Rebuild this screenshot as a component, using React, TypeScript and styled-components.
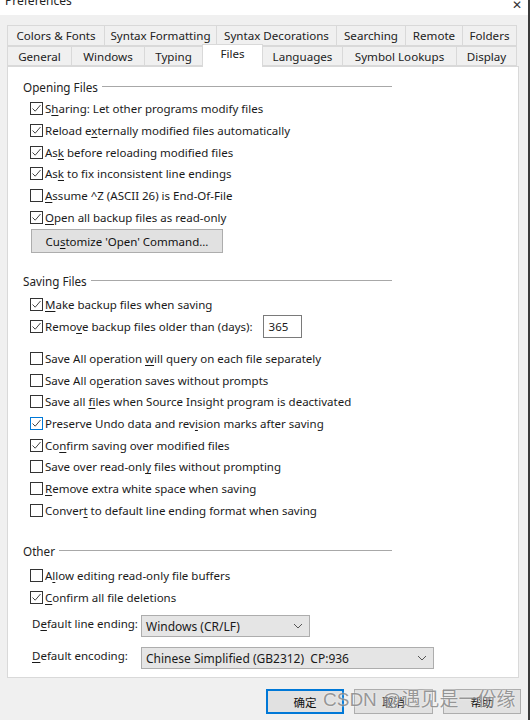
import React from 'react'
import styled, { createGlobalStyle } from 'styled-components'

const GlobalStyle = createGlobalStyle`
    html, body {
        margin: 0;
        padding: 0;
        background: #f0f0f0;
    }
    body {
        font-family: "Noto Sans", "Noto Sans CJK SC", sans-serif;
        font-size: 11.5px;
        color: #1a1a1a;
    }
`

const Window = styled.div`
    position: relative;
    width: 530px;
    height: 720px;
    box-sizing: border-box;
    background: #f0f0f0;
    border-right: 2px solid #3a3a3a;
    display: flex;
    flex-direction: column;
    overflow: hidden;
`
const TitleBar = styled.div`
    height: 15px;
    background: #fff;
    display: flex;
    justify-content: space-between;
    overflow: hidden;
    padding: 0 6px 0 5px;
`
const TitleText = styled.span`
    font-size: 12px;
    line-height: 12px;
    margin-top: -5px;
    color: #222;
`
const CloseGlyph = styled.span`
    font-size: 12px;
    line-height: 10px;
    color: #333;
`
const Body = styled.div`
    padding: 10px 0 0 7px;
    display: flex;
    flex-direction: column;
`
const TabRow = styled.div<{ $h: number }>`
    display: flex;
    align-items: flex-end;
    padding-left: 1px;
    height: ${p => p.$h}px;
`
const Tab = styled.div<{ $w: number; $selected?: boolean; $h: number }>`
    box-sizing: border-box;
    width: ${p => p.$w + 1}px;
    height: ${p => (p.$selected ? p.$h + 3 : p.$h)}px;
    margin-left: -1px;
    margin-top: ${p => (p.$selected ? -2 : 0)}px;
    margin-bottom: ${p => (p.$selected ? -1 : 0)}px;
    position: ${p => (p.$selected ? 'relative' : 'static')};
    z-index: ${p => (p.$selected ? 2 : 0)};
    background: ${p => (p.$selected ? '#fff' : '#f0f0f0')};
    border: 1px solid #d9d9d9;
    border-bottom: ${p => (p.$selected ? 'none' : '1px solid #d9d9d9')};
    display: flex;
    align-items: ${p => (p.$selected ? 'flex-start' : 'center')};
    padding-top: ${p => (p.$selected ? 1 : 0)}px;
    justify-content: center;
    font-size: 11.6px;
    color: #222;
    white-space: nowrap;
`
const Panel = styled.div`
    position: relative;
    z-index: 1;
    box-sizing: border-box;
    width: 512px;
    height: 612px;
    background: #fff;
    border: 1px solid #d9d9d9;
    padding: 9px 0 0 15px;
    display: flex;
    flex-direction: column;
`
const Section = styled.div<{ $top: number }>`
    display: flex;
    flex-direction: column;
    margin-top: ${p => p.$top}px;
`
const SectionHead = styled.div`
    width: 369px;
    height: 21px;
    display: flex;
    align-items: center;
    gap: 4px;
    font-size: 11.7px;
    color: #222;
    &::after {
        content: '';
        flex: 1;
        height: 1px;
        background: #a8a8a8;
    }
`
const Items = styled.div<{ $top?: number }>`
    display: flex;
    flex-direction: column;
    padding-left: 7px;
    margin-top: ${p => p.$top || 0}px;
`
const Row = styled.div`
    height: 21.7px;
    display: flex;
    align-items: center;
    gap: 2px;
    white-space: nowrap;
`
const Box = styled.span<{ $hover?: boolean }>`
    box-sizing: border-box;
    width: 13px;
    height: 13px;
    border: 1px solid ${p => (p.$hover ? '#0078d7' : '#333')};
    background: #fff;
    display: flex;
    align-items: center;
    justify-content: center;
    flex-shrink: 0;
`
const U = styled.span`
    text-decoration: underline;
    text-underline-offset: 2px;
`
const NumInput = styled.div`
    box-sizing: border-box;
    width: 39px;
    height: 23px;
    margin-left: 8px;
    border: 1px solid #7a7a7a;
    background: #fff;
    display: flex;
    align-items: center;
    padding-left: 5px;
`
const PushButton = styled.div<{ $w: number; $h?: number; $focus?: boolean }>`
    box-sizing: border-box;
    width: ${p => p.$w}px;
    height: ${p => p.$h || 24}px;
    background: #e1e1e1;
    border: ${p => (p.$focus ? '2px solid #0078d7' : '1px solid #adadad')};
    display: flex;
    align-items: center;
    justify-content: center;
    color: #111;
`
const CustomizeWrap = styled.div`
    padding-left: 8px;
    margin-top: 1px;
`
const FieldRow = styled.div<{ $top: number }>`
    display: flex;
    align-items: center;
    margin-top: ${p => p.$top}px;
    padding-left: 9px;
`
const FieldLabel = styled.span`
    width: 109px;
    margin-top: -5px;
    white-space: nowrap;
`
const Select = styled.div<{ $w: number }>`
    box-sizing: border-box;
    width: ${p => p.$w}px;
    height: 22px;
    background: #e5e5e5;
    border: 1px solid #adadad;
    display: flex;
    align-items: center;
    justify-content: space-between;
    padding: 0 6px 0 4px;
    font-size: 12px;
`
const ButtonBar = styled.div`
    display: flex;
    justify-content: flex-end;
    gap: 10px;
    padding: 11px 7px 0 0;
`
const Watermark = styled.div`
    position: absolute;
    left: 323px;
    top: 688px;
    font-family: "Liberation Sans", "Noto Sans CJK SC", sans-serif;
    font-size: 19px;
    line-height: 24px;
    color: rgba(120, 120, 120, 0.75);
    text-shadow: 0 0 2px rgba(255, 255, 255, 0.9);
    white-space: nowrap;
    pointer-events: none;
`
const Annotation = styled.svg`
    position: absolute;
    left: 0;
    top: 0;
    pointer-events: none;
`

const Mnemonic: React.FC<{ text: string }> = ({ text }) => {
    const i = text.indexOf('&')
    if (i < 0) return <span>{text}</span>
    return (
        <span>
            {text.slice(0, i)}
            <U>{text[i + 1]}</U>
            {text.slice(i + 2)}
        </span>
    )
}

const Check: React.FC<{ label: string; checked?: boolean; hover?: boolean; children?: React.ReactNode }> = ({ label, checked, hover, children }) => (
    <Row>
        <Box $hover={hover}>
            {checked && (
                <svg width="11" height="11" viewBox="0 0 11 11">
                    <polyline points="1.5,5.5 4.2,8.2 9.5,2" fill="none" stroke="#444" strokeWidth="1" />
                </svg>
            )}
        </Box>
        <Mnemonic text={label} />
        {children}
    </Row>
)

const Chevron = () => (
    <svg width="10" height="6" viewBox="0 0 10 6">
        <polyline points="1,1 5,5 9,1" fill="none" stroke="#555" strokeWidth="1" />
    </svg>
)

const tabsTop = [
    ['Colors & Fonts', 97],
    ['Syntax Formatting', 112],
    ['Syntax Decorations', 120],
    ['Searching', 69],
    ['Remote', 57],
    ['Folders', 54],
] as const
const tabsBottom = [
    ['General', 64],
    ['Windows', 73],
    ['Typing', 58],
    ['Files', 60],
    ['Languages', 80],
    ['Symbol Lookups', 114],
    ['Display', 60],
] as const

const openingItems: [string, boolean][] = [
    ['S&haring: Let other programs modify files', true],
    ['Reload e&xternally modified files automatically', true],
    ['As&k before reloading modified files', true],
    ['As&k to fix inconsistent line endings', true],
    ['&Assume ^Z (ASCII 26) is End-Of-File', false],
    ['&Open all backup files as read-only', true],
]
const savingItems: [string, boolean, boolean?][] = [
    ['Save All operation &will query on each file separately', false],
    ['Save All o&peration saves without prompts', false],
    ['Save all &files when Source Insight program is deactivated', false],
    ['Preserve Undo data and rev&ision marks after saving', true, true],
    ['Co&nfirm saving over modified files', true],
    ['Save over read-onl&y files without prompting', false],
    ['&Remove extra white space when saving', false],
    ['Conver&t to default line ending format when saving', false],
]

export default function App() {
    return (
        <Window>
            <GlobalStyle />
            <TitleBar>
                <TitleText>Preferences</TitleText>
                <CloseGlyph>✕</CloseGlyph>
            </TitleBar>
            <Body>
                <TabRow $h={21}>
                    {tabsTop.map(([name, w]) => (
                        <Tab key={name} $w={w} $h={21}>{name}</Tab>
                    ))}
                </TabRow>
                <TabRow $h={20}>
                    {tabsBottom.map(([name, w]) => (
                        <Tab key={name} $w={w} $h={20} $selected={name === 'Files'}>{name}</Tab>
                    ))}
                </TabRow>
                <Panel>
                    <Section $top={0}>
                        <SectionHead>Opening Files</SectionHead>
                        <Items $top={1}>
                            {openingItems.map(([label, checked]) => (
                                <Check key={label} label={label} checked={checked} />
                            ))}
                        </Items>
                        <CustomizeWrap>
                            <PushButton $w={192} $h={24}>
                                <Mnemonic text="Cu&stomize 'Open' Command..." />
                            </PushButton>
                        </CustomizeWrap>
                    </Section>
                    <Section $top={17}>
                        <SectionHead>Saving Files</SectionHead>
                        <Items $top={3}>
                            <Check label="&Make backup files when saving" checked />
                            <Check label="Remo&ve backup files older than (days):" checked>
                                <NumInput>365</NumInput>
                            </Check>
                        </Items>
                        <Items $top={10}>
                            {savingItems.map(([label, checked, hover]) => (
                                <Check key={label} label={label} checked={checked} hover={hover} />
                            ))}
                        </Items>
                    </Section>
                    <Section $top={19}>
                        <SectionHead>Other</SectionHead>
                        <Items $top={4}>
                            <Check label="A&llow editing read-only file buffers" />
                            <Check label="&Confirm all file deletions" checked />
                        </Items>
                        <FieldRow $top={7}>
                            <FieldLabel><Mnemonic text="D&efault line ending:" /></FieldLabel>
                            <Select $w={169}>
                                <span>Windows (CR/LF)</span>
                                <Chevron />
                            </Select>
                        </FieldRow>
                        <FieldRow $top={10}>
                            <FieldLabel><Mnemonic text="&Default encoding:" /></FieldLabel>
                            <Select $w={293}>
                                <span>Chinese Simplified (GB2312)&nbsp;&nbsp;CP:936</span>
                                <Chevron />
                            </Select>
                        </FieldRow>
                    </Section>
                </Panel>
                <ButtonBar>
                    <PushButton $w={78} $h={25} $focus>确定</PushButton>
                    <PushButton $w={79} $h={25}>取消</PushButton>
                    <PushButton $w={78} $h={25}>帮助</PushButton>
                </ButtonBar>
            </Body>
            <Annotation width="530" height="720" viewBox="0 0 530 720">
                <line x1="477" y1="575" x2="375" y2="636" stroke="#e8252a" strokeWidth="3.5" strokeLinecap="round" />
                <polygon points="360,645 373,627 382,641" fill="#e8252a" />
            </Annotation>
            <Watermark>CSDN @遇见是一份缘</Watermark>
        </Window>
    )
}
